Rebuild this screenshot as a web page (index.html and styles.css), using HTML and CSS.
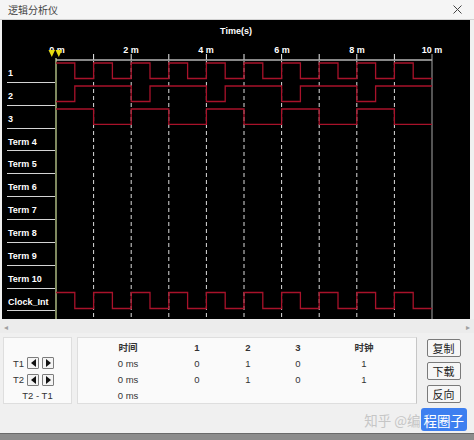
FILE: index.html
```html
<!DOCTYPE html>
<html lang="zh">
<head>
    <meta charset="UTF-8">
    <title>逻辑分析仪</title>
    <link rel="stylesheet" href="styles.css">
</head>
<body>

<div class="window">
    <div class="titlebar">
        <span class="title">逻辑分析仪</span>
        <svg class="close" width="9" height="9" viewBox="0 0 9 9">
            <path d="M0.5 0.5L8.5 8.5M8.5 0.5L0.5 8.5" stroke="#444" stroke-width="1"/>
        </svg>
    </div>

    <div class="scope">
        <div class="labels">
            <div class="label">1</div>
            <div class="label">2</div>
            <div class="label">3</div>
            <div class="label">Term 4</div>
            <div class="label">Term 5</div>
            <div class="label">Term 6</div>
            <div class="label">Term 7</div>
            <div class="label">Term 8</div>
            <div class="label">Term 9</div>
            <div class="label">Term 10</div>
            <div class="label">Clock_Int</div>
        </div>

        <svg class="plot" viewBox="55 20 415 299" width="415" height="299">
            <text class="axis-title" x="236" y="34">Time(s)</text>
            <g class="ticks-text">
                <text x="57" y="53">0 m</text>
                <text x="131" y="53">2 m</text>
                <text x="206" y="53">4 m</text>
                <text x="282" y="53">6 m</text>
                <text x="357" y="53">8 m</text>
                <text x="432" y="53">10 m</text>
            </g>

            <!-- grid -->
            <path d="M93.6 54V60M131.2 54V60M168.8 54V60M206.4 54V60M244 54V60M281.6 54V60M319.2 54V60M356.8 54V60M394.4 54V60" stroke="#eee" stroke-width="1"/>
            <path d="M93.6 61V319M131.2 61V319M168.8 61V319M206.4 61V319M244 61V319M281.6 61V319M319.2 61V319M356.8 61V319M394.4 61V319" stroke="#ddd" stroke-width="1" stroke-dasharray="4 3"/>
            <path d="M56 60H432" stroke="#b4b4b4" stroke-width="1.5"/>
            <path d="M432 54V319" stroke="#a8a8a8" stroke-width="1"/>
            <path d="M56 58V319" stroke="#d6e6a0" stroke-width="1.2"/>

            <!-- signals -->
            <g class="wave">
                <path d="M56 63H74.8V78.5H93.6V63H112.4V78.5H131.2V63H150V78.5H168.8V63H187.6V78.5H206.4V63H225.2V78.5H244V63H262.8V78.5H281.6V63H300.4V78.5H319.2V63H338V78.5H356.8V63H375.6V78.5H394.4V63H413.2V78.5H432"/>
                <path d="M56 101.5H74.8V86H131.2V101.5H150V86H206.4V101.5H225.2V86H281.6V101.5H300.4V86H356.8V101.5H375.6V86H432"/>
                <path d="M56 109H93.6V124.3H131.2V109H168.8V124.3H206.4V109H244V124.3H281.6V109H319.2V124.3H356.8V109H394.4V124.3H432"/>
                <path d="M56 292.5H74.8V308.5H93.6V292.5H112.4V308.5H131.2V292.5H150V308.5H168.8V292.5H187.6V308.5H206.4V292.5H225.2V308.5H244V292.5H262.8V308.5H281.6V292.5H300.4V308.5H319.2V292.5H338V308.5H356.8V292.5H375.6V308.5H394.4V292.5H413.2V308.5H432"/>
            </g>

            <!-- T1 / T2 cursors -->
            <polygon points="48.5,50 55,50 51.8,57" fill="#e6dc10"/>
            <polygon points="55.5,50 62,50 58.8,57" fill="#e6dc10"/>
        </svg>
    </div>

    <div class="hscroll">
        <span>&#9666;</span>
        <span>&#9656;</span>
    </div>

    <div class="panel">
        <div class="cursors">
            <div class="cursor-row">
                <span>T1</span>
                <button class="nav prev"></button>
                <button class="nav next"></button>
            </div>
            <div class="cursor-row">
                <span>T2</span>
                <button class="nav prev"></button>
                <button class="nav next"></button>
            </div>
            <div class="delta">T2 - T1</div>
        </div>

        <div class="readout">
            <div class="head">时间</div>
            <div class="head">1</div>
            <div class="head">2</div>
            <div class="head">3</div>
            <div class="head">时钟</div>

            <div>0 ms</div><div>0</div><div>1</div><div>0</div><div>1</div>
            <div>0 ms</div><div>0</div><div>1</div><div>0</div><div>1</div>
            <div>0 ms</div>
        </div>

        <div class="actions">
            <button class="btn">复制</button>
            <button class="btn">下载</button>
            <button class="btn">反向</button>
        </div>
    </div>

    <div class="watermark">
        <span class="wm-text">知乎 @编</span><span class="wm-tag">程圈子</span>
    </div>
</div>

</body>
</html>
```

FILE: styles.css
```css
body {
    margin: 0;
    background-color: #8c8c8c;
    font-family: "Liberation Sans", "Noto Sans CJK SC", sans-serif;
}

.window {
    position: relative;
    width: 474px;
    height: 434px;
    box-sizing: border-box;
    background-color: #f0f0f0;
    border-bottom: 1px solid #6a6a6a;
}

.titlebar {
    height: 19px;
    display: flex;
    align-items: center;
    justify-content: space-between;
    padding: 0 12px 0 8px;
    background-color: #f5f5f5;
    border-bottom: 1px solid #d2d2d2;
}

.title {
    font-family: "Noto Sans CJK SC", sans-serif;
    font-size: 10px;
    color: #444;
}

.close {
    display: block;
}

/* waveform area */
.scope {
    display: flex;
    height: 299px;
    margin: 0 4px 0 2px;
    background-color: #000;
}

.labels {
    width: 48px;
    margin-left: 5px;
    padding-top: 40px;
}

    .label {
        height: 22.86px;
        box-sizing: border-box;
        display: flex;
        align-items: center;
        padding: 4px 0 0 1px;
        border-bottom: 1px solid #d4d4d4;
        color: #fff;
        font-size: 9px;
        font-weight: bold;
    }

.plot {
    display: block;
    overflow: visible;
}

    .plot text {
        fill: #fff;
        font-family: "Liberation Sans", sans-serif;
        font-size: 9px;
        font-weight: bold;
        text-anchor: middle;
    }

    .wave path {
        fill: none;
        stroke: #a8122a;
        stroke-width: 1.3;
    }

.hscroll {
    height: 14px;
    display: flex;
    align-items: center;
    justify-content: space-between;
    padding: 2px 4px 0 4px;
    box-sizing: border-box;
    background-color: #ececec;
    color: #a0a0a0;
    font-size: 8px;
}

/* bottom panel */
.panel {
    display: flex;
    padding: 4px 0 0 3px;
}

.cursors {
    width: 69px;
    height: 67px;
    box-sizing: border-box;
    margin-right: 5px;
    padding: 17px 0 0 9px;
    background-color: #fafafa;
    border: 1px solid #dedede;
    font-size: 9.5px;
    color: #333;
}

    .cursor-row {
        height: 16.5px;
        display: flex;
        align-items: center;
        gap: 3px;
    }

    .delta {
        height: 15px;
        display: flex;
        align-items: center;
        justify-content: center;
        margin-left: -9px;
    }

.nav {
    width: 12px;
    height: 12px;
    padding: 0;
    display: flex;
    align-items: center;
    justify-content: center;
    background-color: #f4f4f4;
    border: 1px solid #7c7c7c;
    border-radius: 1px;
}

    .nav::before {
        content: "";
        border-top: 4px solid transparent;
        border-bottom: 4px solid transparent;
    }

    .prev::before {
        border-right: 5px solid #111;
    }

    .next::before {
        border-left: 5px solid #111;
    }

.readout {
    width: 340px;
    height: 67px;
    box-sizing: border-box;
    padding-top: 1px;
    display: grid;
    grid-template-columns: 100px 38px 64px 36px 96px;
    grid-auto-rows: 16px;
    align-items: center;
    text-align: center;
    background-color: #fafafa;
    border: 1px solid #dedede;
    border-right-color: #c6c6c6;
    font-size: 9.5px;
    color: #333;
}

    .readout .head {
        font-weight: bold;
    }

.actions {
    width: 53px;
    display: flex;
    flex-direction: column;
    align-items: center;
    gap: 5px;
    padding-top: 2px;
}

.btn {
    width: 34px;
    height: 18px;
    padding: 0;
    background-color: #f6f6f6;
    border: 1px solid #7a7a7a;
    border-radius: 2px;
    font-family: "Noto Sans CJK SC", sans-serif;
    font-size: 11px;
    line-height: 16px;
    color: #222;
}

/* watermark over the footer */
.watermark {
    position: absolute;
    right: 7px;
    top: 408px;
    height: 23px;
    display: flex;
    align-items: center;
    font-family: "Noto Sans CJK SC", sans-serif;
    font-size: 13.5px;
}

.wm-text {
    color: #c6c6c6;
}

.wm-tag {
    height: 23px;
    display: flex;
    align-items: center;
    padding: 0 3px;
    background-color: #3d7ff0;
    border-radius: 3px;
    color: #fff;
}
```
